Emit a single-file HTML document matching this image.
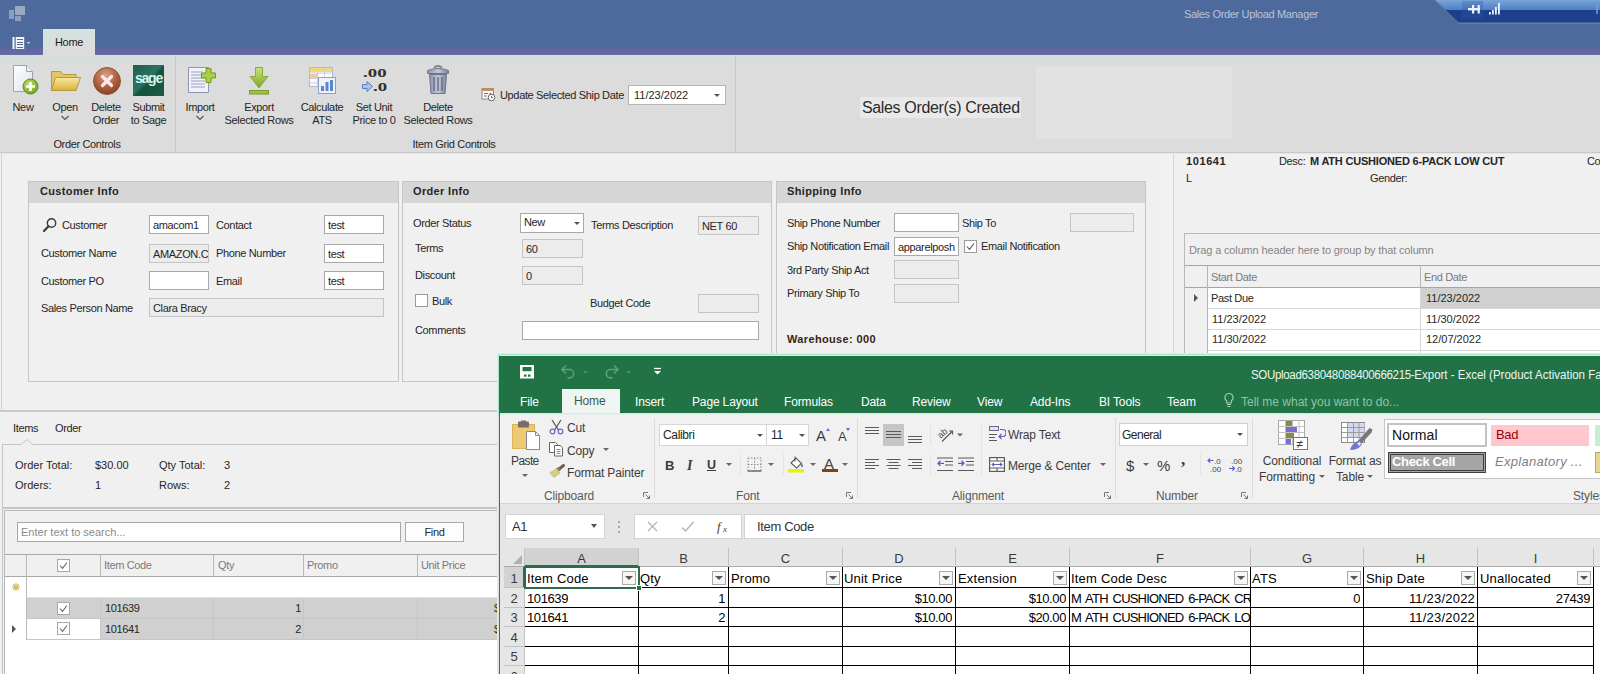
<!DOCTYPE html>
<html><head><meta charset="utf-8"><title>Sales Order Upload Manager</title>
<style>
html,body{margin:0;padding:0;}
body{width:1600px;height:674px;overflow:hidden;position:relative;background:#f0f0f0;font-family:"Liberation Sans",sans-serif;font-size:11px;color:#202020;}
div,span{box-sizing:border-box;}
.a{position:absolute;}
.t{position:absolute;white-space:nowrap;line-height:13px;height:13px;font-size:11px;color:#262626;letter-spacing:-.35px;}
.b{font-weight:bold;letter-spacing:.35px;}
.c{text-align:center;}
.r{text-align:right;}
.in{position:absolute;background:#fff;border:1px solid #a8a8a8;height:19px;line-height:18px;padding-left:3px;white-space:nowrap;overflow:hidden;font-size:11px;color:#262626;letter-spacing:-.35px;}
.ro{background:#ececec;border-color:#c4c4c4;}
.ph{position:absolute;background:#d6d6d6;height:21px;}
.pn{position:absolute;border:1px solid #c6c6c6;background:#f0f0f0;}
.cb{position:absolute;width:13px;height:13px;background:#fff;border:1px solid #9a9a9a;}
.cb svg{position:absolute;left:0;top:0;}
.xl{font-size:12px;line-height:15px;height:15px;color:#3c3c3c;letter-spacing:-.15px;}
.xt{position:absolute;white-space:nowrap;font-size:12px;line-height:15px;height:15px;color:#fff;letter-spacing:-.15px;}
.vs{position:absolute;width:1px;background:#dcdcdc;}
.cell{position:absolute;white-space:nowrap;letter-spacing:.2px;font-size:13px;line-height:17px;height:17px;color:#000;overflow:hidden;}
.ch{position:absolute;white-space:nowrap;font-size:13px;line-height:16px;height:16px;color:#3a3a3a;text-align:center;}
.fb{position:absolute;width:14px;height:14px;background:#f6f6f6;border:1px solid #ababab;}
.fb:after{content:"";position:absolute;left:2px;top:4px;border-left:4px solid transparent;border-right:4px solid transparent;border-top:4px solid #555;}
.gl{position:absolute;background:#000;}
.n{letter-spacing:-.4px;}
.cp{letter-spacing:-.8px;word-spacing:2px;}
</style></head><body>

<!-- ===== App title bar ===== -->
<div class="a" style="left:0;top:0;width:1600px;height:54px;background:#4e6a9d;"></div>
<div class="a" style="left:0;top:46px;width:1600px;height:8px;background:linear-gradient(#4e6a9d,#6365a2 50%,#6467a3);"></div>
<!-- app icon -->
<div class="a" style="left:9px;top:10px;width:5px;height:9px;background:#8b9ebd;"></div>
<div class="a" style="left:15px;top:6px;width:10px;height:9px;background:#98a9c6;"></div>
<div class="a" style="left:15px;top:16px;width:6px;height:5px;background:#8b9ebd;"></div>
<div class="t" style="left:1184px;top:8px;color:#b9c3d6;">Sales Order Upload Manager</div>
<!-- RDP bar -->
<svg class="a" style="left:1430px;top:0" width="170" height="26" viewBox="0 0 170 26">
<defs><linearGradient id="g1" x1="0" y1="0" x2="0" y2="1"><stop offset="0" stop-color="#7aa4d6"/><stop offset="1" stop-color="#4d80c4"/></linearGradient></defs>
<polygon points="4,0 170,0 170,24 29,24" fill="#5d7fa6"/>
<polygon points="5,0 170,0 170,22.5 28.5,22.5" fill="#1d408d"/>
<polygon points="5,0 170,0 170,10 15.5,10" fill="url(#g1)"/>
<rect x="32" y="1" width="21" height="17" fill="#3157a8" opacity=".3"/>
<g fill="#e8f4ff"><rect x="38" y="8" width="12" height="2.4"/><rect x="42" y="5" width="2.2" height="8.5"/><rect x="47.6" y="5" width="2.2" height="8.5"/>
<rect x="59" y="12" width="1.8" height="2.5"/><rect x="62" y="10" width="1.8" height="4.5"/><rect x="65" y="7" width="1.8" height="7.5"/><rect x="68" y="3" width="1.8" height="11.5"/></g>
<rect x="166" y="5" width="2" height="9" fill="#7fa0d4" opacity=".7"/>
</svg>
<!-- app menu button -->
<svg class="a" style="left:11px;top:35px" width="24" height="16" viewBox="0 0 24 16"><rect x="1.500" y="2" width="2" height="12" fill="#f2f5fa"/><rect x="4.700" y="2" width="8.500" height="12" fill="#f2f5fa"/><g stroke="#4e6a9d" stroke-width="1"><path d="M6 4.500h6M6 7.500h6M6 9.500h6M6 12.500h6"/></g><path d="M15.500 7h4l-2 2z" fill="#c5cfdf"/></svg>
<!-- Home tab -->
<div class="a" style="left:43px;top:29px;width:52px;height:27px;background:linear-gradient(#cde4e0,#d9dfdd 40%,#dcdcdc 75%);z-index:2;"></div>
<div class="t" style="left:43px;width:52px;top:36px;text-align:center;z-index:3;color:#1c1c1c;">Home</div>

<!-- ===== App ribbon ===== -->
<div class="a" style="left:0;top:54px;width:1600px;height:98px;background:#dcdcdc;"></div>
<div class="a" style="left:0;top:54px;width:1600px;height:9px;background:linear-gradient(#d2dfdb,#d6dedc 70%,#dcdcdc);"></div>
<div class="a" style="left:0;top:54px;width:1600px;height:1px;background:#6a6ea8;"></div>
<div class="a" style="left:0;top:152px;width:1600px;height:1px;background:#c8c8c8;"></div>
<div class="a" style="left:0;top:153px;width:1600px;height:1px;background:#e6e6e6;"></div>
<div class="vs" style="left:175px;top:56px;height:96px;background:#c9c9c9;"></div>
<div class="vs" style="left:735px;top:56px;height:96px;background:#c9c9c9;"></div>
<div class="a" style="left:1036px;top:66px;width:196px;height:73px;background:#e2e2e2;"></div>
<div class="a" style="left:860px;top:97px;width:161px;height:21px;background:#e9e9e9;"></div>
<div class="t" style="left:862px;top:98px;font-size:16px;line-height:19px;height:19px;color:#2a2a2a;">Sales Order(s) Created</div>

<!-- ribbon button labels -->
<div class="t c" style="left:3px;width:40px;top:101px;">New</div>
<div class="t c" style="left:45px;width:40px;top:101px;">Open</div>
<div class="t c" style="left:80px;width:52px;top:101px;">Delete<br>Order</div>
<div class="t c" style="left:120px;width:57px;top:101px;">Submit<br>to Sage</div>
<div class="t c" style="left:175px;width:50px;top:101px;">Import</div>
<div class="t c" style="left:215px;width:88px;top:101px;">Export<br>Selected Rows</div>
<div class="t c" style="left:292px;width:60px;top:101px;">Calculate<br>ATS</div>
<div class="t c" style="left:343px;width:62px;top:101px;">Set Unit<br>Price to 0</div>
<div class="t c" style="left:394px;width:88px;top:101px;">Delete<br>Selected Rows</div>
<div class="t c" style="left:37px;width:100px;top:138px;">Order Controls</div>
<div class="t c" style="left:394px;width:120px;top:138px;">Item Grid Controls</div>
<svg class="a" style="left:60px;top:115px" width="10" height="6" viewBox="0 0 10 6"><path d="M1.5 1l3.5 3.5L8.500 1" fill="none" stroke="#555" stroke-width="1.2"/></svg>
<svg class="a" style="left:195px;top:115px" width="10" height="6" viewBox="0 0 10 6"><path d="M1.5 1l3.5 3.5L8.500 1" fill="none" stroke="#555" stroke-width="1.2"/></svg>
<div class="t" style="left:500px;top:89px;">Update Selected Ship Date</div>
<div class="in" style="left:628px;top:85px;width:98px;height:20px;line-height:18px;padding-left:5px;border-color:#b5b5b5;letter-spacing:0;">11/23/2022</div>
<div class="a" style="left:714px;top:94px;border-left:3px solid transparent;border-right:3px solid transparent;border-top:3px solid #555;"></div>

<!-- ===== ribbon icons ===== -->
<!-- New -->
<svg class="a" style="left:11px;top:64px" width="30" height="32" viewBox="0 0 30 32">
<defs><linearGradient id="pg" x1="0" y1="0" x2="1" y2="1"><stop offset="0" stop-color="#ffffff"/><stop offset="1" stop-color="#dfe2f0"/></linearGradient>
<radialGradient id="gr" cx=".4" cy=".35" r=".7"><stop offset="0" stop-color="#c4e06a"/><stop offset="1" stop-color="#6f9f1e"/></radialGradient></defs>
<path d="M2.500 1.500h13l6 6v20h-19z" fill="url(#pg)" stroke="#9aa0bd" stroke-width="1"/><path d="M15.500 1.500v6h6" fill="#eef0f8" stroke="#9aa0bd" stroke-width="1"/>
<circle cx="19.500" cy="22.500" r="7.500" fill="url(#gr)" stroke="#5d8a17" stroke-width="1"/><path d="M19.500 18v9M15 22.500h9" stroke="#fff" stroke-width="2.600"/></svg>
<!-- Open -->
<svg class="a" style="left:50px;top:68px" width="32" height="26" viewBox="0 0 32 26">
<defs><linearGradient id="fo" x1="0" y1="0" x2="0" y2="1"><stop offset="0" stop-color="#f7e9a0"/><stop offset="1" stop-color="#d9b23c"/></linearGradient></defs>
<path d="M1.500 22.500v-19h9l2.500 3h13v4" fill="#e3c660" stroke="#b8983a"/><path d="M1.500 22.500l4-13h25l-4.500 13z" fill="url(#fo)" stroke="#b8983a"/></svg>
<!-- Delete order -->
<svg class="a" style="left:92px;top:66px" width="30" height="30" viewBox="0 0 30 30">
<defs><radialGradient id="rd" cx=".45" cy=".3" r=".75"><stop offset="0" stop-color="#dba283"/><stop offset=".55" stop-color="#b0603e"/><stop offset="1" stop-color="#7d3f24"/></radialGradient></defs>
<circle cx="15" cy="15" r="13.500" fill="url(#rd)" stroke="#8a5a40"/><path d="M10.500 10.500l9 9M19.500 10.500l-9 9" stroke="#ffe9ee" stroke-width="3.200" stroke-linecap="round"/></svg>
<!-- sage -->
<div class="a" style="left:133px;top:65px;width:31px;height:31px;background:linear-gradient(135deg,#1d5e4a 0%,#2a7560 45%,#15523f 55%,#1b5b48 100%);"></div>
<div class="t b" style="left:133px;width:31px;top:71px;text-align:center;color:#d4f7ea;font-size:14px;letter-spacing:-1.200px;line-height:15px;height:15px;">sage</div>
<!-- Import -->
<svg class="a" style="left:187px;top:65px" width="32" height="30" viewBox="0 0 32 30">
<path d="M1.500 2.500h20v25h-20z" fill="#f1f2fa" stroke="#8e95b5"/><g stroke="#9aa0c6" stroke-width="1.100"><path d="M4 7h12M4 10h12M4 13h14M4 16h14M4 19h14M4 22h14"/></g>
<path d="M19 3.500h5v4.500h4.500v5h-4.500v4.500h-5v-4.500h-4.500v-5h4.500z" fill="#a9cf45" stroke="#6f9a1f"/></svg>
<!-- Export -->
<svg class="a" style="left:247px;top:66px" width="24" height="30" viewBox="0 0 24 30">
<defs><linearGradient id="ge" x1="0" y1="0" x2="0" y2="1"><stop offset="0" stop-color="#c9e37a"/><stop offset="1" stop-color="#7ea824"/></linearGradient></defs>
<path d="M8.500 1.500h7v9h5.500l-9 11.500l-9-11.500h5.500z" fill="url(#ge)" stroke="#8aa840"/><rect x="2.500" y="24.500" width="19" height="3.500" fill="#9cc33a" stroke="#7a9a30"/></svg>
<!-- Calculate ATS -->
<svg class="a" style="left:308px;top:66px" width="30" height="30" viewBox="0 0 30 30">
<rect x="1.500" y="1.500" width="23" height="19" fill="#fbfbfd" stroke="#b5b9cc"/><rect x="2" y="2" width="22" height="4" fill="#f0d878"/><rect x="2" y="8" width="8" height="4" fill="#f5c9a0"/><path d="M2 7h22M2 12.500h22M2 17h22M9.500 2v18M16.500 2v18" stroke="#c9ccda" stroke-width="1"/>
<rect x="10.500" y="11.500" width="17" height="16" fill="#eef3fb" stroke="#8fa0c4"/><g fill="#5b86cf"><rect x="13" y="20" width="3" height="5"/><rect x="17.500" y="16" width="3" height="9"/><rect x="22" y="14" width="3" height="11"/></g></svg>
<!-- Set unit price -->
<div class="t b" style="left:363px;top:66px;font-family:'Liberation Serif',serif;font-size:13px;line-height:14px;height:14px;color:#2f2f2f;letter-spacing:0;transform:scaleX(1.45);transform-origin:0 0;">.00</div>
<div class="t b" style="left:373px;top:80px;font-family:'Liberation Serif',serif;font-size:13px;line-height:14px;height:14px;color:#2f2f2f;letter-spacing:0;transform:scaleX(1.45);transform-origin:0 0;">.0</div>
<svg class="a" style="left:361px;top:80px" width="13" height="13" viewBox="0 0 13 13"><path d="M1.500 4.500h4.500v-3l5.500 5l-5.500 5v-3h-4.500z" fill="#a9c4ec" stroke="#5b7fc0"/></svg>
<!-- Trash -->
<svg class="a" style="left:425px;top:64px" width="26" height="32" viewBox="0 0 26 32">
<defs><linearGradient id="tr" x1="0" y1="0" x2="1" y2="0"><stop offset="0" stop-color="#8d93a8"/><stop offset=".5" stop-color="#c5c9d8"/><stop offset="1" stop-color="#7d8399"/></linearGradient></defs>
<path d="M9 3.500q4-3 8 0" fill="none" stroke="#7a8096" stroke-width="2"/><path d="M2.500 6.500q10.500-4 21 0v3h-21z" fill="url(#tr)" stroke="#6f758c"/>
<path d="M4.500 10.500h17l-1.500 19h-14z" fill="url(#tr)" stroke="#6f758c"/><path d="M9 13v14M13 13v14M17 13v14" stroke="#6a7088" stroke-width="1.500"/></svg>
<!-- calendar small -->
<svg class="a" style="left:481px;top:87px" width="15" height="15" viewBox="0 0 15 15"><rect x="1" y="1.500" width="11.500" height="10.500" fill="#fbfbfb" stroke="#8a8a8a"/><rect x="1" y="1.500" width="11.500" height="2.500" fill="#c98f5a"/><path d="M3 6.500h4M3 9h3M8.500 6.500h2" stroke="#777"/><circle cx="10.500" cy="10.500" r="3.300" fill="#fff" stroke="#666"/><path d="M10.500 8.800v1.900h1.500" stroke="#555" fill="none" stroke-width=".9"/></svg>

<!-- ===== Main form area ===== -->
<div class="a" style="left:1px;top:154px;width:1px;height:257px;background:#cfcfcf;"></div>
<!-- Customer Info -->
<div class="pn" style="left:28px;top:181px;width:371px;height:201px;"></div>
<div class="ph" style="left:29px;top:182px;width:369px;"></div>
<div class="t b" style="left:40px;top:185px;">Customer Info</div>
<svg class="a" style="left:42px;top:217px" width="16" height="16" viewBox="0 0 16 16"><circle cx="9.500" cy="6" r="4.200" fill="none" stroke="#3a3a3a" stroke-width="1.400"/><path d="M6.500 9.200L2 14" stroke="#3a3a3a" stroke-width="2.200" stroke-linecap="round"/></svg>
<div class="t" style="left:62px;top:219px;">Customer</div>
<div class="in" style="left:149px;top:215px;width:60px;">amacom1</div>
<div class="t" style="left:216px;top:219px;">Contact</div>
<div class="in" style="left:324px;top:215px;width:60px;">test</div>
<div class="t" style="left:41px;top:247px;">Customer Name</div>
<div class="in ro" style="left:149px;top:244px;width:60px;">AMAZON.C</div>
<div class="t" style="left:216px;top:247px;">Phone Number</div>
<div class="in" style="left:324px;top:244px;width:60px;">test</div>
<div class="t" style="left:41px;top:275px;">Customer PO</div>
<div class="in" style="left:149px;top:271px;width:60px;"></div>
<div class="t" style="left:216px;top:275px;">Email</div>
<div class="in" style="left:324px;top:271px;width:60px;">test</div>
<div class="t" style="left:41px;top:302px;">Sales Person Name</div>
<div class="in ro" style="left:149px;top:298px;width:235px;">Clara Bracy</div>

<!-- Order Info -->
<div class="pn" style="left:402px;top:181px;width:370px;height:201px;"></div>
<div class="ph" style="left:403px;top:182px;width:368px;"></div>
<div class="t b" style="left:413px;top:185px;">Order Info</div>
<div class="t" style="left:413px;top:217px;">Order Status</div>
<div class="in" style="left:520px;top:213px;width:64px;height:20px;line-height:17px;">New</div>
<div class="a" style="left:574px;top:222px;border-left:3px solid transparent;border-right:3px solid transparent;border-top:3px solid #555;"></div>
<div class="t" style="left:591px;top:219px;">Terms Description</div>
<div class="in ro" style="left:698px;top:216px;width:61px;">NET 60</div>
<div class="t" style="left:415px;top:242px;">Terms</div>
<div class="in ro" style="left:522px;top:239px;width:61px;">60</div>
<div class="t" style="left:415px;top:269px;">Discount</div>
<div class="in ro" style="left:522px;top:266px;width:61px;">0</div>
<div class="cb" style="left:415px;top:294px;"></div>
<div class="t" style="left:432px;top:295px;">Bulk</div>
<div class="t" style="left:590px;top:297px;">Budget Code</div>
<div class="in ro" style="left:698px;top:294px;width:61px;"></div>
<div class="t" style="left:415px;top:324px;">Comments</div>
<div class="in" style="left:522px;top:321px;width:237px;"></div>

<!-- Shipping Info -->
<div class="pn" style="left:776px;top:181px;width:370px;height:201px;"></div>
<div class="ph" style="left:777px;top:182px;width:368px;"></div>
<div class="t b" style="left:787px;top:185px;">Shipping Info</div>
<div class="t" style="left:787px;top:217px;">Ship Phone Number</div>
<div class="in" style="left:894px;top:213px;width:65px;"></div>
<div class="t" style="left:962px;top:217px;">Ship To</div>
<div class="in ro" style="left:1070px;top:213px;width:64px;"></div>
<div class="t" style="left:787px;top:240px;">Ship Notification Email</div>
<div class="in" style="left:894px;top:237px;width:65px;">apparelposh</div>
<div class="cb" style="left:964px;top:240px;"><svg width="11" height="11" viewBox="0 0 11 11"><path d="M2 5.500l2.500 2.800L9 2.500" fill="none" stroke="#555" stroke-width="1.100"/></svg></div>
<div class="t" style="left:981px;top:240px;">Email Notification</div>
<div class="t" style="left:787px;top:264px;">3rd Party Ship Act</div>
<div class="in ro" style="left:894px;top:260px;width:65px;"></div>
<div class="t" style="left:787px;top:287px;">Primary Ship To</div>
<div class="in ro" style="left:894px;top:284px;width:65px;"></div>
<div class="t b" style="left:787px;top:333px;color:#3a2410;">Warehouse: 000</div>

<!-- Right panel -->
<div class="a" style="left:1173px;top:154px;width:1px;height:520px;background:#d4d4d4;"></div>
<div class="a" style="left:1161px;top:154px;width:12px;height:520px;background:#f2f2f2;"></div>
<div class="t b" style="left:1186px;top:155px;letter-spacing:.6px;">101641</div>
<div class="t" style="left:1279px;top:155px;">Desc:</div>
<div class="t b" style="left:1310px;top:155px;letter-spacing:-.2px;">M ATH CUSHIONED 6-PACK LOW CUT</div>
<div class="t" style="left:1587px;top:155px;">Co</div>
<div class="t" style="left:1186px;top:172px;">L</div>
<div class="t" style="left:1370px;top:172px;">Gender:</div>
<div class="a" style="left:1184px;top:233px;width:420px;height:450px;border:1px solid #b9b9b9;background:#f0f0f0;"></div>
<div class="t" style="left:1189px;top:244px;color:#858585;letter-spacing:-.15px;">Drag a column header here to group by that column</div>
<div class="a" style="left:1185px;top:265px;width:415px;height:1px;background:#a5a5a5;"></div>
<div class="a" style="left:1185px;top:287px;width:415px;height:1px;background:#a5a5a5;"></div>
<div class="a" style="left:1207px;top:265px;width:1px;height:90px;background:#b4b4b4;"></div>
<div class="a" style="left:1420px;top:265px;width:1px;height:23px;background:#b4b4b4;"></div>
<div class="t" style="left:1211px;top:271px;color:#7a7a7a;">Start Date</div>
<div class="t" style="left:1424px;top:271px;color:#7a7a7a;">End Date</div>
<div class="a" style="left:1208px;top:288px;width:392px;height:70px;background:#fff;"></div>
<div class="a" style="left:1421px;top:288px;width:179px;height:20px;background:#d0d0d0;"></div>
<div class="a" style="left:1208px;top:308px;width:392px;height:1px;background:#d6d6d6;"></div>
<div class="a" style="left:1208px;top:329px;width:392px;height:1px;background:#d6d6d6;"></div>
<div class="a" style="left:1208px;top:350px;width:392px;height:1px;background:#d6d6d6;"></div>
<div class="a" style="left:1420px;top:288px;width:1px;height:70px;background:#d6d6d6;"></div>
<div class="a" style="left:1194px;top:294px;border-top:4px solid transparent;border-bottom:4px solid transparent;border-left:4px solid #555;"></div>
<div class="t" style="left:1211px;top:292px;">Past Due</div>
<div class="t" style="left:1426px;top:292px;letter-spacing:0;">11/23/2022</div>
<div class="t" style="left:1212px;top:313px;letter-spacing:0;">11/23/2022</div>
<div class="t" style="left:1426px;top:313px;letter-spacing:0;">11/30/2022</div>
<div class="t" style="left:1212px;top:333px;letter-spacing:0;">11/30/2022</div>
<div class="t" style="left:1426px;top:333px;letter-spacing:0;">12/07/2022</div>
<div class="t" style="left:1212px;top:354px;letter-spacing:0;">12/07/2022</div>
<div class="t" style="left:1426px;top:354px;letter-spacing:0;">12/14/2022</div>

<!-- ===== Bottom-left: tabs, totals, grid ===== -->
<div class="a" style="left:0;top:410px;width:1174px;height:2px;background:#c9c9c9;"></div>
<div class="t" style="left:13px;top:422px;">Items</div>
<div class="t" style="left:55px;top:422px;">Order</div>
<div class="a" style="left:2px;top:444px;width:1172px;height:1px;background:#c4c4c4;"></div>
<svg class="a" style="left:20px;top:439px" width="14" height="7" viewBox="0 0 14 7"><path d="M0 6.500L7 .5L14 6.500" fill="#f0f0f0" stroke="#c4c4c4"/><path d="M1.500 6.500h11" stroke="#f0f0f0" stroke-width="1.500"/></svg>
<div class="a" style="left:2px;top:444px;width:1px;height:230px;background:#c4c4c4;"></div>
<div class="t" style="left:15px;top:459px;letter-spacing:0;">Order Total:</div>
<div class="t" style="left:95px;top:459px;letter-spacing:0;">$30.00</div>
<div class="t" style="left:159px;top:459px;letter-spacing:0;">Qty Total:</div>
<div class="t" style="left:224px;top:459px;">3</div>
<div class="t" style="left:15px;top:479px;letter-spacing:0;">Orders:</div>
<div class="t" style="left:95px;top:479px;">1</div>
<div class="t" style="left:159px;top:479px;letter-spacing:0;">Rows:</div>
<div class="t" style="left:224px;top:479px;">2</div>
<div class="a" style="left:2px;top:507px;width:1172px;height:2px;background:#c6c6c6;"></div>
<div class="a" style="left:4px;top:510px;width:1168px;height:170px;border:1px solid #b9b9b9;background:#f0f0f0;"></div>
<div class="in" style="left:17px;top:522px;width:384px;height:20px;line-height:18px;color:#8a8a8a;letter-spacing:0;">Enter text to search...</div>
<div class="a" style="left:405px;top:522px;width:59px;height:20px;border:1px solid #a8a8a8;background:#fdfdfd;"></div>
<div class="t c" style="left:405px;width:59px;top:526px;">Find</div>
<!-- grid header -->
<div class="a" style="left:5px;top:554px;width:1167px;height:1px;background:#a8a8a8;"></div>
<div class="a" style="left:5px;top:576px;width:1167px;height:1px;background:#a8a8a8;"></div>
<div class="a" style="left:5px;top:577px;width:1167px;height:100px;background:#fff;"></div>
<div class="a" style="left:26px;top:555px;width:1px;height:85px;background:#b9b9b9;"></div>
<div class="a" style="left:100px;top:555px;width:1px;height:21px;background:#b9b9b9;"></div>
<div class="a" style="left:213px;top:555px;width:1px;height:21px;background:#b9b9b9;"></div>
<div class="a" style="left:303px;top:555px;width:1px;height:21px;background:#b9b9b9;"></div>
<div class="a" style="left:417px;top:555px;width:1px;height:21px;background:#b9b9b9;"></div>
<div class="cb" style="left:57px;top:559px;border-color:#a8a8a8;"><svg width="11" height="11" viewBox="0 0 11 11"><path d="M2 5.500l2.500 2.800L9 2.500" fill="none" stroke="#666" stroke-width="1.100"/></svg></div>
<div class="t" style="left:104px;top:559px;color:#7a7a7a;">Item Code</div>
<div class="t" style="left:218px;top:559px;color:#7a7a7a;">Qty</div>
<div class="t" style="left:307px;top:559px;color:#7a7a7a;">Promo</div>
<div class="t" style="left:421px;top:559px;color:#7a7a7a;">Unit Price</div>
<!-- new row -->
<svg class="a" style="left:12px;top:583px" width="8" height="8" viewBox="0 0 9 9"><g stroke="#c5b341" stroke-width="1.300"><path d="M4.500 0v9M0 4.500h9M1.300 1.300l6.400 6.400M7.700 1.300L1.300 7.700"/></g><circle cx="4.500" cy="4.500" r="2" fill="#d6c653"/></svg>
<div class="a" style="left:27px;top:597px;width:1145px;height:1px;background:#e3e3e3;"></div>
<!-- rows -->
<div class="a" style="left:27px;top:598px;width:1145px;height:42px;background:#d0d0d0;"></div>
<div class="a" style="left:27px;top:619px;width:73px;height:20px;background:#fff;"></div>
<div class="a" style="left:27px;top:618px;width:1145px;height:1px;background:#c6c6c6;"></div>
<div class="a" style="left:100px;top:598px;width:1px;height:42px;background:#c6c6c6;"></div>
<div class="a" style="left:213px;top:598px;width:1px;height:42px;background:#c6c6c6;"></div>
<div class="a" style="left:303px;top:598px;width:1px;height:42px;background:#c6c6c6;"></div>
<div class="a" style="left:417px;top:598px;width:1px;height:42px;background:#c6c6c6;"></div>
<div class="a" style="left:27px;top:639px;width:1145px;height:1px;background:#c6c6c6;"></div>
<div class="cb" style="left:57px;top:602px;border-color:#a8a8a8;"><svg width="11" height="11" viewBox="0 0 11 11"><path d="M2 5.500l2.500 2.800L9 2.500" fill="none" stroke="#666" stroke-width="1.100"/></svg></div>
<div class="cb" style="left:57px;top:622px;border-color:#a8a8a8;"><svg width="11" height="11" viewBox="0 0 11 11"><path d="M2 5.500l2.500 2.800L9 2.500" fill="none" stroke="#666" stroke-width="1.100"/></svg></div>
<div class="t" style="left:105px;top:602px;">101639</div>
<div class="t" style="left:105px;top:623px;">101641</div>
<div class="t r" style="left:250px;width:51px;top:602px;">1</div>
<div class="t r" style="left:250px;width:51px;top:623px;">2</div>
<div class="t" style="left:494px;top:602px;">$10.00</div>
<div class="t" style="left:494px;top:623px;">$10.00</div>
<div class="a" style="left:12px;top:625px;border-top:4px solid transparent;border-bottom:4px solid transparent;border-left:4px solid #555;"></div>

<!-- ===== Excel window ===== -->
<div class="a" style="left:497px;top:353px;width:1110px;height:330px;background:#d6f3e7;"></div>
<div class="a" style="left:498px;top:354px;width:1110px;height:330px;background:#a9e8cf;"></div>
<div class="a" style="left:499px;top:355px;width:1101px;height:2px;background:#5fae88;"></div>
<div class="a" style="left:499px;top:355px;width:1101px;height:319px;background:#e6e6e6;"></div>
<div class="a" style="left:499px;top:356px;width:1101px;height:57px;background:#217346;"></div>
<div class="a" style="left:497px;top:416px;width:2px;height:258px;background:linear-gradient(90deg,#eaf0ed,#d3e2da);"></div>
<div class="a" style="left:499px;top:412px;width:1px;height:262px;background:#3d7557;"></div>
<!-- QAT -->
<svg class="a" style="left:519px;top:364px" width="16" height="16" viewBox="0 0 16 16"><rect x="1" y="1" width="14" height="13.500" fill="#fff"/><rect x="3.500" y="3" width="9" height="4.200" fill="#217346"/><rect x="5" y="10.500" width="2.500" height="2.200" fill="#217346"/><rect x="9" y="10.500" width="2.500" height="2.200" fill="#217346"/></svg>
<svg class="a" style="left:560px;top:364px" width="30" height="16" viewBox="0 0 30 16"><path d="M2.500 5.500h7a4.200 4.200 0 0 1 0 8.400h-2" fill="none" stroke="#5f9e7c" stroke-width="1.600"/><path d="M6 1.500l-4 4l4 4" fill="none" stroke="#5f9e7c" stroke-width="1.600"/><path d="M23 7h5l-2.500 2.500z" fill="#4f8f6c"/></svg>
<svg class="a" style="left:603px;top:364px" width="30" height="16" viewBox="0 0 30 16"><path d="M14.500 5.500h-7a4.200 4.200 0 0 0 0 8.400h2" fill="none" stroke="#5f9e7c" stroke-width="1.600"/><path d="M11 1.500l4 4l-4 4" fill="none" stroke="#5f9e7c" stroke-width="1.600"/><path d="M23 7h5l-2.500 2.500z" fill="#4f8f6c"/></svg>
<svg class="a" style="left:653px;top:367px" width="9" height="9" viewBox="0 0 9 9"><path d="M1 1.500h7" stroke="#fff" stroke-width="1.300"/><path d="M1 4h7l-3.500 3.500z" fill="#fff"/></svg>
<div class="xt" style="left:1251px;top:367.500px;font-size:12.500px;letter-spacing:-.35px;color:#edf6f1;transform:scaleX(.92);transform-origin:0 0;"><span id="t1">SOUpload638048088400666215-</span><span id="t2" style="letter-spacing:0">Export - Excel (Product Activation </span><span style="letter-spacing:0">Failed)</span></div>
<!-- tabs -->
<div class="a" style="left:562px;top:389px;width:58px;height:25px;background:#eef5f2;"></div>
<div class="xt" style="left:520px;top:395px;">File</div>
<div class="xt" style="left:574px;top:394px;color:#3e5a4b;">Home</div>
<div class="xt" style="left:635px;top:395px;">Insert</div>
<div class="xt" style="left:692px;top:395px;">Page Layout</div>
<div class="xt" style="left:784px;top:395px;">Formulas</div>
<div class="xt" style="left:861px;top:395px;">Data</div>
<div class="xt" style="left:912px;top:395px;">Review</div>
<div class="xt" style="left:977px;top:395px;">View</div>
<div class="xt" style="left:1030px;top:395px;">Add-Ins</div>
<div class="xt" style="left:1099px;top:395px;">BI Tools</div>
<div class="xt" style="left:1167px;top:395px;">Team</div>
<svg class="a" style="left:1223px;top:392px" width="12" height="16" viewBox="0 0 12 16"><path d="M6 1.500a4 4 0 0 1 2.300 7.300v2.200h-4.600v-2.200A4 4 0 0 1 6 1.500z" fill="none" stroke="#9fcdb5" stroke-width="1.100"/><path d="M4 12.500h4M4.500 14.500h3" stroke="#9fcdb5" stroke-width="1.100"/></svg>
<div class="xt" style="left:1241px;top:395px;color:#8fc3a8;letter-spacing:0;">Tell me what you want to do...</div>
<!-- ribbon body -->
<div class="a" style="left:500px;top:413px;width:1100px;height:90px;background:#f1f1f1;"></div>
<div class="a" style="left:500px;top:413px;width:1100px;height:2px;background:linear-gradient(#c4eddd,#f1f1f1);"></div>
<div class="a" style="left:500px;top:503px;width:1100px;height:1px;background:#d4d4d4;"></div>
<div class="vs" style="left:654px;top:418px;height:80px;"></div>
<div class="vs" style="left:857px;top:418px;height:80px;"></div>
<div class="vs" style="left:1115px;top:418px;height:80px;"></div>
<div class="vs" style="left:1252px;top:418px;height:80px;"></div>
<div class="vs" style="left:930px;top:424px;height:21px;background:#e3e3e3;"></div>
<div class="vs" style="left:930px;top:454px;height:21px;background:#e3e3e3;"></div>
<div class="vs" style="left:981px;top:424px;height:51px;background:#e3e3e3;"></div>
<div class="vs" style="left:1200px;top:454px;height:21px;background:#e3e3e3;"></div>
<div class="vs" style="left:740px;top:454px;height:21px;background:#e3e3e3;"></div>
<div class="vs" style="left:783px;top:454px;height:21px;background:#e3e3e3;"></div>
<!-- clipboard -->
<svg class="a" style="left:511px;top:420px" width="30" height="32" viewBox="0 0 30 32"><rect x="1.500" y="4.500" width="22" height="24" fill="#ecc972" stroke="#d9b458"/><rect x="7" y="1.500" width="11" height="6" rx="1" fill="#7a6a6a"/><rect x="10" y="0.500" width="5" height="3" fill="#7a6a6a"/><path d="M15.500 11.500h9l4 4v14h-13z" fill="#fff" stroke="#8a8a8a"/><path d="M24.500 11.500v4h4" fill="none" stroke="#8a8a8a"/></svg>
<div class="t xl" style="left:511px;top:454px;letter-spacing:-.6px;">Paste</div>
<div class="a" style="left:522px;top:474px;border-left:3px solid transparent;border-right:3px solid transparent;border-top:3px solid #666;"></div>
<svg class="a" style="left:549px;top:419px" width="15" height="16" viewBox="0 0 15 16"><path d="M3 1l6.500 10M12 1L5.500 11" stroke="#5a5a5a" stroke-width="1.300" fill="none"/><circle cx="3.500" cy="12.500" r="2.300" fill="none" stroke="#6a6fc0" stroke-width="1.300"/><circle cx="11.500" cy="12.500" r="2.300" fill="none" stroke="#6a6fc0" stroke-width="1.300"/></svg>
<div class="t xl" style="left:567px;top:421px;">Cut</div>
<svg class="a" style="left:548px;top:441px" width="16" height="16" viewBox="0 0 16 16"><path d="M1.500 1.500h6l2 2v8h-8z" fill="#fff" stroke="#666"/><path d="M6.500 4.500h6l2 2v8.500h-8z" fill="#fff" stroke="#666"/><path d="M8.500 8.500h4M8.500 10.500h4M8.500 12.500h4" stroke="#888"/></svg>
<div class="t xl" style="left:567px;top:444px;">Copy</div>
<div class="a" style="left:603px;top:448px;border-left:3px solid transparent;border-right:3px solid transparent;border-top:3px solid #666;"></div>
<svg class="a" style="left:548px;top:463px" width="17" height="16" viewBox="0 0 17 16"><path d="M15.500 2.500l-5 4" stroke="#6d5c5c" stroke-width="3" stroke-linecap="round"/><path d="M11.500 5.500l-3 2.500" stroke="#8a7a6a" stroke-width="4"/><path d="M8.500 5.500l3.500 4.500l-6 4.500l-4.500-4.500z" fill="#d0cf86" stroke="#b9b86a" stroke-width=".6"/></svg>
<div class="t xl" style="left:567px;top:466px;">Format Painter</div>
<div class="t xl" style="left:544px;top:489px;color:#5a5a5a;">Clipboard</div>
<!-- font group -->
<div class="in" style="left:659px;top:424px;width:108px;height:22px;line-height:21px;border-color:#d6d6d6;font-size:12px;padding-left:3px;">Calibri</div>
<div class="in" style="left:766px;top:424px;width:43px;height:22px;line-height:21px;border-color:#d6d6d6;font-size:12px;padding-left:4px;">11</div>
<div class="a" style="left:757px;top:434px;border-left:3px solid transparent;border-right:3px solid transparent;border-top:3px solid #555;"></div>
<div class="a" style="left:799px;top:434px;border-left:3px solid transparent;border-right:3px solid transparent;border-top:3px solid #555;"></div>
<div class="t xl" style="left:816px;top:428px;font-size:15px;">A</div>
<div class="a" style="left:826px;top:428px;border-left:2.500px solid transparent;border-right:2.500px solid transparent;border-bottom:3px solid #6a6fc0;"></div>
<div class="t xl" style="left:838px;top:429px;font-size:13px;">A</div>
<div class="a" style="left:846px;top:428px;border-left:2.500px solid transparent;border-right:2.500px solid transparent;border-top:3px solid #6a6fc0;"></div>
<div class="t xl b" style="left:665px;top:458px;font-size:13px;letter-spacing:0;">B</div>
<div class="t xl" style="left:687px;top:458px;font-size:14px;font-style:italic;font-weight:bold;font-family:'Liberation Serif',serif;">I</div>
<div class="t xl" style="left:707px;top:458px;font-size:12.500px;font-weight:bold;text-decoration:underline;letter-spacing:0;">U</div>
<div class="a" style="left:726px;top:463px;border-left:3px solid transparent;border-right:3px solid transparent;border-top:3px solid #666;"></div>
<svg class="a" style="left:747px;top:457px" width="15" height="15" viewBox="0 0 15 15"><rect x="1" y="1" width="13" height="13" fill="none" stroke="#8a8a8a" stroke-dasharray="1.500 1.500"/><path d="M7.500 1v13M1 7.500h13" stroke="#8a8a8a" stroke-dasharray="1.500 1.500"/><path d="M.5 14h14" stroke="#6a6a6a" stroke-width="1.400"/></svg>
<div class="a" style="left:768px;top:463px;border-left:3px solid transparent;border-right:3px solid transparent;border-top:3px solid #666;"></div>
<svg class="a" style="left:788px;top:455px" width="18" height="18" viewBox="0 0 18 18"><path d="M3 8l5-5l5.500 5.500l-5 4.500z" fill="#fff" stroke="#5a5a5a" stroke-width="1.100"/><path d="M7 1.500v5" stroke="#5a5a5a" stroke-width="1.100"/><path d="M14 8.500q2 2.500 0 4q-2-1.500 0-4z" fill="#6a6fc0"/><rect x="0" y="14" width="16" height="3.500" fill="#eaf205"/></svg>
<div class="a" style="left:810px;top:463px;border-left:3px solid transparent;border-right:3px solid transparent;border-top:3px solid #666;"></div>
<div class="t xl" style="left:824px;top:456px;font-size:15px;color:#444;">A</div>
<div class="a" style="left:822px;top:468.500px;width:16px;height:3.500px;background:#854112;"></div>
<div class="a" style="left:842px;top:463px;border-left:3px solid transparent;border-right:3px solid transparent;border-top:3px solid #666;"></div>
<div class="t xl" style="left:736px;top:489px;color:#5a5a5a;">Font</div>
<svg class="a" style="left:642px;top:491px" width="9" height="9" viewBox="0 0 9 9"><path d="M1.500 6v-4.500h4.500" fill="none" stroke="#777"/><path d="M3.500 3.500l4 4M7.500 4.500v3h-3" fill="none" stroke="#777"/></svg>
<svg class="a" style="left:845px;top:491px" width="9" height="9" viewBox="0 0 9 9"><path d="M1.500 6v-4.500h4.500" fill="none" stroke="#777"/><path d="M3.500 3.500l4 4M7.500 4.500v3h-3" fill="none" stroke="#777"/></svg>
<svg class="a" style="left:1103px;top:491px" width="9" height="9" viewBox="0 0 9 9"><path d="M1.500 6v-4.500h4.500" fill="none" stroke="#777"/><path d="M3.500 3.500l4 4M7.500 4.500v3h-3" fill="none" stroke="#777"/></svg>
<svg class="a" style="left:1240px;top:491px" width="9" height="9" viewBox="0 0 9 9"><path d="M1.500 6v-4.500h4.500" fill="none" stroke="#777"/><path d="M3.500 3.500l4 4M7.500 4.500v3h-3" fill="none" stroke="#777"/></svg>
<!-- alignment group -->
<div class="a" style="left:883px;top:424px;width:21px;height:22px;background:#c6c6c6;"></div>
<svg class="a" style="left:865px;top:426px" width="58" height="20" viewBox="0 0 58 20"><g stroke="#5a5a5a" stroke-width="1.200"><path d="M0 1.500h14M0 4.500h14M0 7.500h14"/><path d="M21 5.500h15M21 8.500h15M21 11.500h15"/><path d="M43 10.500h14M43 13.500h14M43 16.500h14"/></g></svg>
<svg class="a" style="left:865px;top:458px" width="58" height="14" viewBox="0 0 58 14"><g stroke="#5a5a5a" stroke-width="1.200"><path d="M0 1.500h14M0 4.500h10M0 7.500h14M0 10.500h10"/><path d="M21.500 1.500h14M23.500 4.500h10M21.500 7.500h14M23.500 10.500h10"/><path d="M43 1.500h14M47 4.500h10M43 7.500h14M47 10.500h10"/></g></svg>
<svg class="a" style="left:937px;top:425px" width="28" height="18" viewBox="0 0 28 18"><text x="1" y="11" font-family="Liberation Sans, sans-serif" font-size="9" fill="#4a4a4a" transform="rotate(-40 6 9)">ab</text><path d="M5 16.500L15 6.500" stroke="#5a5a5a" stroke-width="1.200"/><path d="M12 6h3.500v3.500" fill="none" stroke="#5a5a5a" stroke-width="1.200"/><path d="M20 8.500h6l-3 3z" fill="#666"/></svg>
<svg class="a" style="left:937px;top:457px" width="40" height="15" viewBox="0 0 40 15"><g stroke="#5a5a5a" stroke-width="1.200"><path d="M0 1h16M8 4.500h8M8 8h8M0 13.500h16M21 1h16M29 4.500h8M29 8h8M21 13.500h16"/></g><g stroke="#5a5fc0" stroke-width="1.300" fill="none"><path d="M1 6.300h6M3.500 3.800L1 6.300l2.500 2.500"/><path d="M21 6.300h6M24.500 3.800L27 6.300l-2.500 2.500"/></g></svg>
<svg class="a" style="left:988px;top:425px" width="18" height="18" viewBox="0 0 18 18"><rect x="1.500" y="1.500" width="9" height="4" fill="#dfe3f5" stroke="#6a6a8a"/><path d="M1 9.500h8M1 12.500h6M1 15.500h8" stroke="#5a5a5a" stroke-width="1.200"/><path d="M12 4.500h2.500a2 2 0 0 1 0 7h-3" fill="none" stroke="#5a5fc0" stroke-width="1.200"/><path d="M13.500 9l-2.500 2.500l2.500 2.500" fill="none" stroke="#5a5fc0" stroke-width="1.200"/></svg>
<div class="t xl" style="left:1008px;top:428px;">Wrap Text</div>
<svg class="a" style="left:989px;top:457px" width="16" height="15" viewBox="0 0 16 15"><rect x=".6" y=".6" width="14.800" height="13.800" fill="#fff" stroke="#5a5a5a" stroke-width="1.200"/><path d="M.6 4h14.800M.6 11h14.800M8 .6v3.400M8 11v3.400" stroke="#5a5a5a" stroke-width="1.100"/><path d="M3 7.500h10M5 5.800L3 7.500l2 1.700M11 5.800l2 1.700l-2 1.700" fill="none" stroke="#5a5fc0" stroke-width="1.100"/></svg>
<div class="t xl" style="left:1008px;top:459px;">Merge &amp; Center</div>
<div class="a" style="left:1100px;top:463px;border-left:3px solid transparent;border-right:3px solid transparent;border-top:3px solid #666;"></div>
<div class="t xl" style="left:952px;top:489px;color:#5a5a5a;">Alignment</div>
<!-- number group -->
<div class="in" style="left:1119px;top:423px;width:129px;height:23px;line-height:23px;border-color:#d0d0d0;font-size:12px;padding-left:2px;letter-spacing:-.5px;">General</div>
<div class="a" style="left:1237px;top:433px;border-left:3px solid transparent;border-right:3px solid transparent;border-top:3px solid #555;"></div>
<div class="t xl" style="left:1126px;top:457px;font-size:15px;line-height:17px;height:17px;">$</div>
<div class="a" style="left:1143px;top:463px;border-left:3px solid transparent;border-right:3px solid transparent;border-top:3px solid #666;"></div>
<div class="t xl" style="left:1157px;top:457px;font-size:15px;line-height:17px;height:17px;">%</div>
<div class="t xl b" style="left:1181px;top:451px;font-size:17px;line-height:17px;height:17px;font-family:'Liberation Serif',serif;">,</div>
<svg class="a" style="left:1207px;top:456px" width="38" height="18" viewBox="0 0 38 18"><g font-family="Liberation Sans, sans-serif" font-size="8" fill="#444"><text x="7" y="7.500">.0</text><text x="3" y="15.500">.00</text><text x="24" y="7.500">.00</text><text x="28" y="15.500">.0</text></g><g stroke="#5a5fc0" stroke-width="1.200" fill="none"><path d="M1 4.500h5.500M3.200 2.300L1 4.500l2.200 2.200"/><path d="M22 12.500h5.500M25.300 10.300l2.200 2.200l-2.200 2.200"/></g></svg>
<div class="t xl" style="left:1156px;top:489px;color:#5a5a5a;">Number</div>
<!-- styles group -->
<svg class="a" style="left:1278px;top:420px" width="32" height="32" viewBox="0 0 32 32"><rect x=".5" y=".5" width="26" height="24" fill="#fff" stroke="#a8a8a8"/><path d="M.5 6.500h26M.5 12.500h26M.5 18.500h26M7.500 .5v24M14.500 .5v24M21 .5v24" stroke="#c2c2c2"/><rect x="8" y="1" width="6" height="5" fill="#8a8a3a"/><rect x="8" y="7" width="11" height="5" fill="#7a6fd0"/><rect x="8" y="13" width="8" height="5" fill="#8a8a3a"/><rect x="8" y="19" width="5" height="5" fill="#7a6fd0"/><rect x="15.500" y="17.500" width="14" height="12" fill="#fff" stroke="#777"/><text x="18.500" y="28" font-family="Liberation Sans, sans-serif" font-size="12" fill="#333">≠</text></svg>
<div class="t xl c" style="left:1252px;width:80px;top:454px;">Conditional</div>
<div class="t xl c" style="left:1247px;width:80px;top:470px;">Formatting</div>
<div class="a" style="left:1319px;top:475px;border-left:3px solid transparent;border-right:3px solid transparent;border-top:3px solid #666;"></div>
<svg class="a" style="left:1341px;top:422px" width="32" height="30" viewBox="0 0 32 30"><rect x=".5" y=".5" width="23" height="20" fill="#fff" stroke="#8a8a8a"/><rect x="6.500" y="1" width="17" height="15" fill="#d3d8ee"/><path d="M.5 5.500h23M.5 10.500h23M.5 15.500h23M6.500 .5v20M12.500 .5v20M18 .5v20" stroke="#9a9a9a"/><path d="M17.500 18.500l11-12.500l3 1.500l-1 3l-10 11z" fill="#777"/><path d="M9 28q2-7 8.500-9.500l3.500 3.500q-3 6-12 6z" fill="#7478d2"/><path d="M16 21.500l2.500-1.500l1.500 1.500l-1.500 2.500z" fill="#fff" opacity=".85"/></svg>
<div class="t xl c" style="left:1315px;width:80px;top:454px;">Format as</div>
<div class="t xl c" style="left:1310px;width:80px;top:470px;">Table</div>
<div class="a" style="left:1367px;top:475px;border-left:3px solid transparent;border-right:3px solid transparent;border-top:3px solid #666;"></div>
<div class="a" style="left:1384px;top:419px;width:230px;height:60px;background:#fff;border:1px solid #c6c6c6;"></div>
<div class="a" style="left:1387px;top:423px;width:100px;height:24px;background:#fff;border:2px solid #c2c2c2;"></div>
<div class="t" style="left:1392px;top:427px;font-size:14px;line-height:16px;height:16px;color:#111;letter-spacing:.1px;">Normal</div>
<div class="a" style="left:1491px;top:425px;width:98px;height:21px;background:#ffc7ce;"></div>
<div class="t" style="left:1496px;top:427px;font-size:13px;line-height:16px;height:16px;color:#9c0006;">Bad</div>
<div class="a" style="left:1595px;top:425px;width:10px;height:21px;background:#c6efce;"></div>
<div class="a" style="left:1390px;top:454px;width:94px;height:17px;background:#a5a5a5;border:1px solid #3f3f3f;outline:1px solid #a5a5a5;box-shadow:0 0 0 2px #3f3f3f;"></div>
<div class="t b" style="left:1392px;top:454px;font-size:13px;line-height:16px;height:16px;color:#fff;letter-spacing:-.35px;">Check Cell</div>
<div class="t" style="left:1495px;top:454px;font-size:13px;line-height:16px;height:16px;color:#7f7f7f;font-style:italic;letter-spacing:.3px;">Explanatory ...</div>
<div class="a" style="left:1595px;top:452px;width:10px;height:21px;background:#e6d890;border:1px solid #b2a86a;"></div>
<div class="t xl" style="left:1573px;top:489px;color:#5a5a5a;">Styles</div>

<!-- formula bar -->
<div class="a" style="left:505px;top:514px;width:100px;height:25px;background:#fff;border:1px solid #d4d4d4;"></div>
<div class="t" style="left:512px;top:519px;font-size:13px;line-height:16px;height:16px;color:#333;">A1</div>
<div class="a" style="left:591px;top:524px;border-left:3.500px solid transparent;border-right:3.500px solid transparent;border-top:4px solid #555;"></div>
<div class="a" style="left:618px;top:521px;width:2px;height:12px;background:repeating-linear-gradient(#a6a6a6 0 2px,transparent 2px 5px);"></div>
<div class="a" style="left:634px;top:514px;width:108px;height:25px;background:#fff;border:1px solid #d4d4d4;"></div>
<svg class="a" style="left:646px;top:520px" width="90" height="14" viewBox="0 0 90 14"><path d="M2 2l9 9M11 2l-9 9" stroke="#b5b5b5" stroke-width="1.300"/><path d="M36 7.500l3.500 3.500l8-9" fill="none" stroke="#b5b5b5" stroke-width="1.500"/><text x="71" y="11" font-family="Liberation Serif, serif" font-style="italic" font-size="13" fill="#444">f</text><text x="77" y="12" font-family="Liberation Serif, serif" font-style="italic" font-size="9" fill="#444">x</text></svg>
<div class="a" style="left:744px;top:514px;width:870px;height:25px;background:#fff;border:1px solid #d4d4d4;"></div>
<div class="t" style="left:757px;top:519px;font-size:13px;line-height:16px;height:16px;color:#333;">Item Code</div>

<!-- sheet grid -->
<div class="a" style="left:504px;top:548px;width:1096px;height:19px;background:#e6e6e6;"></div>
<div class="a" style="left:525px;top:567px;width:1075px;height:107px;background:#fff;"></div>
<div class="a" style="left:504px;top:567px;width:21px;height:107px;background:#e6e6e6;"></div>
<div class="a" style="left:504px;top:567px;width:21px;height:21px;background:#d2d2d2;"></div>
<div class="a" style="left:525px;top:548px;width:113px;height:19px;background:#d2d2d2;"></div>
<div class="a" style="left:525px;top:565px;width:114px;height:2px;background:#217346;"></div>
<div class="a" style="left:523px;top:567px;width:2px;height:21px;background:#217346;"></div>
<div class="a" style="left:504px;top:566px;width:1096px;height:1px;background:#ababab;"></div>
<div class="a" style="left:513px;top:555px;border-left:9px solid transparent;border-bottom:9px solid #b2b2b2;"></div>
<!-- column header separators -->
<div class="a" style="left:524px;top:548px;width:1px;height:126px;background:#c2c2c2;"></div>
<div class="a" style="left:638px;top:548px;width:1px;height:19px;background:#c2c2c2;"></div>
<div class="a" style="left:728px;top:548px;width:1px;height:19px;background:#c2c2c2;"></div>
<div class="a" style="left:842px;top:548px;width:1px;height:19px;background:#c2c2c2;"></div>
<div class="a" style="left:955px;top:548px;width:1px;height:19px;background:#c2c2c2;"></div>
<div class="a" style="left:1069px;top:548px;width:1px;height:19px;background:#c2c2c2;"></div>
<div class="a" style="left:1250px;top:548px;width:1px;height:19px;background:#c2c2c2;"></div>
<div class="a" style="left:1363px;top:548px;width:1px;height:19px;background:#c2c2c2;"></div>
<div class="a" style="left:1477px;top:548px;width:1px;height:19px;background:#c2c2c2;"></div>
<div class="a" style="left:1593px;top:548px;width:1px;height:19px;background:#c2c2c2;"></div>
<!-- row header separators -->
<div class="a" style="left:504px;top:587px;width:20px;height:1px;background:#c2c2c2;"></div>
<div class="a" style="left:504px;top:607px;width:20px;height:1px;background:#c2c2c2;"></div>
<div class="a" style="left:504px;top:626px;width:20px;height:1px;background:#c2c2c2;"></div>
<div class="a" style="left:504px;top:646px;width:20px;height:1px;background:#c2c2c2;"></div>
<div class="a" style="left:504px;top:665px;width:20px;height:1px;background:#c2c2c2;"></div>
<div class="ch" style="left:525px;width:113px;top:551px;">A</div>
<div class="ch" style="left:639px;width:89px;top:551px;">B</div>
<div class="ch" style="left:729px;width:113px;top:551px;">C</div>
<div class="ch" style="left:843px;width:112px;top:551px;">D</div>
<div class="ch" style="left:956px;width:113px;top:551px;">E</div>
<div class="ch" style="left:1070px;width:180px;top:551px;">F</div>
<div class="ch" style="left:1251px;width:112px;top:551px;">G</div>
<div class="ch" style="left:1364px;width:113px;top:551px;">H</div>
<div class="ch" style="left:1478px;width:115px;top:551px;">I</div>
<div class="ch" style="left:504px;width:20px;top:571px;">1</div>
<div class="ch" style="left:504px;width:20px;top:591px;">2</div>
<div class="ch" style="left:504px;width:20px;top:610px;">3</div>
<div class="ch" style="left:504px;width:20px;top:630px;">4</div>
<div class="ch" style="left:504px;width:20px;top:649px;">5</div>
<div class="ch" style="left:504px;width:20px;top:669px;">6</div>
<!-- cell borders: horizontal -->
<div class="gl" style="left:525px;top:587px;width:1069px;height:1px;"></div>
<div class="gl" style="left:525px;top:607px;width:1069px;height:1px;"></div>
<div class="gl" style="left:525px;top:626px;width:1069px;height:1px;"></div>
<div class="gl" style="left:525px;top:646px;width:1069px;height:1px;"></div>
<div class="gl" style="left:525px;top:665px;width:1069px;height:1px;"></div>
<!-- vertical -->
<div class="gl" style="left:638px;top:567px;width:1px;height:107px;"></div>
<div class="gl" style="left:728px;top:567px;width:1px;height:107px;"></div>
<div class="gl" style="left:842px;top:567px;width:1px;height:107px;"></div>
<div class="gl" style="left:955px;top:567px;width:1px;height:107px;"></div>
<div class="gl" style="left:1069px;top:567px;width:1px;height:107px;"></div>
<div class="gl" style="left:1250px;top:567px;width:1px;height:107px;"></div>
<div class="gl" style="left:1363px;top:567px;width:1px;height:107px;"></div>
<div class="gl" style="left:1477px;top:567px;width:1px;height:107px;"></div>
<div class="gl" style="left:1593px;top:567px;width:1px;height:107px;"></div>
<!-- selection -->
<div class="a" style="left:524px;top:566px;width:116px;height:23px;border:2px solid #2b6d4b;"></div>
<div class="a" style="left:636px;top:585px;width:6px;height:6px;background:#217346;border:1px solid #fff;"></div>
<!-- header cells -->
<div class="cell" style="left:527px;top:570px;">Item Code</div><div class="fb" style="left:622px;top:571px;"></div>
<div class="cell" style="left:640px;top:570px;">Qty</div><div class="fb" style="left:712px;top:571px;"></div>
<div class="cell" style="left:731px;top:570px;">Promo</div><div class="fb" style="left:826px;top:571px;"></div>
<div class="cell" style="left:844px;top:570px;">Unit Price</div><div class="fb" style="left:939px;top:571px;"></div>
<div class="cell" style="left:958px;top:570px;">Extension</div><div class="fb" style="left:1053px;top:571px;"></div>
<div class="cell" style="left:1071px;top:570px;">Item Code Desc</div><div class="fb" style="left:1234px;top:571px;"></div>
<div class="cell" style="left:1252px;top:570px;">ATS</div><div class="fb" style="left:1347px;top:571px;"></div>
<div class="cell" style="left:1366px;top:570px;">Ship Date</div><div class="fb" style="left:1461px;top:571px;"></div>
<div class="cell" style="left:1480px;top:570px;">Unallocated</div><div class="fb" style="left:1577px;top:571px;"></div>
<!-- data rows -->
<div class="cell n" style="left:527px;top:590px;">101639</div>
<div class="cell r n" style="left:639px;width:86px;top:590px;">1</div>
<div class="cell r n" style="left:843px;width:109px;top:590px;">$10.00</div>
<div class="cell r n" style="left:956px;width:110px;top:590px;">$10.00</div>
<div class="cell cp" style="left:1071px;width:179px;top:590px;">M ATH CUSHIONED 6-PACK CREW</div>
<div class="cell r n" style="left:1251px;width:109px;top:590px;">0</div>
<div class="cell r" style="left:1364px;width:111px;top:590px;">11/23/2022</div>
<div class="cell r n" style="left:1478px;width:112px;top:590px;">27439</div>
<div class="cell n" style="left:527px;top:609px;">101641</div>
<div class="cell r n" style="left:639px;width:86px;top:609px;">2</div>
<div class="cell r n" style="left:843px;width:109px;top:609px;">$10.00</div>
<div class="cell r n" style="left:956px;width:110px;top:609px;">$20.00</div>
<div class="cell cp" style="left:1071px;width:179px;top:609px;">M ATH CUSHIONED 6-PACK LOW CUT</div>
<div class="cell r" style="left:1364px;width:111px;top:609px;">11/23/2022</div>
</body></html>
